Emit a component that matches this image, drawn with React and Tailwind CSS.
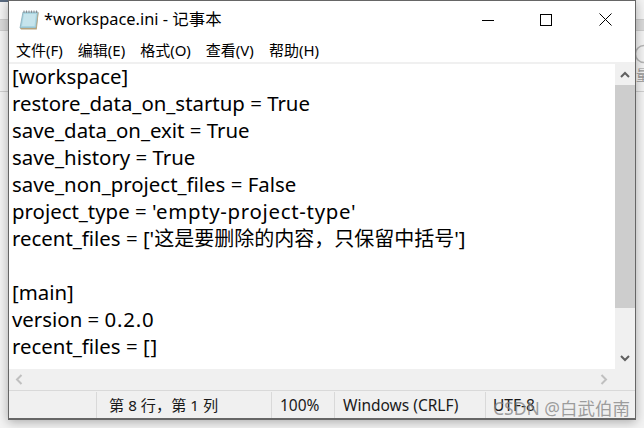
const font = "font-['Noto_Sans','Noto_Sans_CJK_SC',sans-serif]";

function NotepadIcon() {
  return (
    <svg width="20" height="22" viewBox="0 0 20 22">
      <path d="M4 3 L19 3 L17 19 L1 19 Z" fill="#a8d4e0" stroke="#86a9b8" strokeWidth="0.8" />
      <path d="M5 5 L17 5 L15.5 17 L3 17 Z" fill="#c6e4ec" />
      <path d="M1 19 L17 19 L19 3 L19.6 4 L17.8 20.5 L2 20.5 Z" fill="#b5a27c" />
      <path d="M5 1.5 V4 M7.5 1.5 V4 M10 1.5 V4 M12.5 1.5 V4 M15 1.5 V4 M17.5 1.5 V4" stroke="#8a8f94" strokeWidth="1" />
    </svg>
  );
}

export default function App() {
  return (
    <div className={`relative w-[644px] h-[428px] overflow-hidden bg-[#f3f3f3] flex items-start px-2 ${font}`}>
      <div className="absolute left-0 top-0 w-2 h-[2px] bg-[#5a6a80]" />
      <div className="absolute left-0 top-[19px] w-full h-[12px] bg-[#d9d9d9] border-y border-[#cccccc]" />
      <div className="absolute left-0 top-[91px] w-full h-px bg-[#cfcfcf]" />
      <svg width="8" height="20" viewBox="0 0 8 20" className="absolute left-[636px] top-[44px]">
        <path d="M8 1.5A8.5 8.5 0 0 0 8 18.5" fill="none" stroke="#b5b5b5" strokeWidth="1.5" />
      </svg>
      <span className="absolute left-[636px] top-[68px] text-[14px] leading-none text-[#9a9a9a]">量</span>
      <div className="relative w-[628px] h-[420px] bg-white border border-[#666666] border-b-2 flex flex-col shadow-[0_2px_10px_rgba(0,0,0,0.3)]">
        <div className="h-[37px] shrink-0 flex items-center pl-[10px]">
          <NotepadIcon />
          <span className="ml-[5px] text-[16.4px] text-black">*workspace.ini - 记事本</span>
          <div className="ml-auto flex items-center">
            <svg width="14" height="14" viewBox="0 0 14 14" className="mr-[45px]"><path d="M1 7.5H13" stroke="#000" strokeWidth="1" /></svg>
            <svg width="12" height="12" viewBox="0 0 12 12" className="mr-[47px]"><rect x="0.5" y="0.5" width="11" height="11" fill="none" stroke="#000" /></svg>
            <svg width="13" height="13" viewBox="0 0 13 13" className="mr-[23px]"><path d="M0.5 0.5L12.5 12.5M12.5 0.5L0.5 12.5" stroke="#000" strokeWidth="1" /></svg>
          </div>
        </div>
        <div className="h-[24px] shrink-0 flex items-center gap-[15px] pl-[7px] text-[15px] text-black">
          <span>文件(F)</span>
          <span>编辑(E)</span>
          <span>格式(O)</span>
          <span>查看(V)</span>
          <span>帮助(H)</span>
        </div>
        <div className="flex-1 min-h-0 flex border-t-2 border-[#f0f0f0]">
          <div className="flex-1 pl-[3px] text-[20.4px] leading-[27px] text-black whitespace-pre">
            <div className="-mt-px">
              <div>[workspace]</div>
              <div>restore_data_on_startup = True</div>
              <div>save_data_on_exit = True</div>
              <div>save_history = True</div>
              <div>save_non_project_files = False</div>
              <div>project_type = <span className="tracking-[0.7px]">'empty-project-type'</span></div>
              <div>recent_files = ['<span className="text-[20px]">这是要删除的内容，只保留中括号</span>']</div>
              <div>{"\u00a0"}</div>
              <div>[main]</div>
              <div>version = <span className="tracking-[0.8px]">0.2.0</span></div>
              <div>recent_files = <span className="tracking-[1px]">[]</span></div>
            </div>
          </div>
          <div className="w-[20px] bg-[#f0f0f0] flex flex-col items-center">
            <div className="h-[21px] shrink-0 flex items-center justify-center">
              <svg width="10" height="7" viewBox="0 0 10 7"><path d="M1 6L5 2L9 6" fill="none" stroke="#606060" strokeWidth="2" /></svg>
            </div>
            <div className="w-full h-[223px] bg-[#cdcdcd]" />
            <div className="flex-1 flex items-end justify-center pb-[7px]">
              <svg width="10" height="7" viewBox="0 0 10 7"><path d="M1 1L5 5L9 1" fill="none" stroke="#606060" strokeWidth="2" /></svg>
            </div>
          </div>
        </div>
        <div className="h-[21px] shrink-0 bg-[#f0f0f0] flex items-center justify-between px-[6px]">
          <svg width="8" height="11" viewBox="0 0 8 11"><path d="M6.5 1L2 5.5L6.5 10" fill="none" stroke="#c0c0c0" strokeWidth="2" /></svg>
          <svg width="8" height="11" viewBox="0 0 8 11" className="mr-[21px]"><path d="M1.5 1L6 5.5L1.5 10" fill="none" stroke="#c0c0c0" strokeWidth="2" /></svg>
        </div>
        <div className="h-[28px] shrink-0 bg-[#f0f0f0] border-t border-[#d9d9d9] flex text-[15.5px] text-[#1a1a1a] pt-[1px]">
          <div className="w-[87px] shrink-0" />
          <div className="w-[175px] shrink-0 border-l border-[#d9d9d9] pl-[12px] leading-[26px] text-[15.2px]">第 8 行，第 1 列</div>
          <div className="w-[63px] shrink-0 border-l border-[#d9d9d9] pl-[8px] leading-[26px]">100%</div>
          <div className="w-[151px] shrink-0 border-l border-[#d9d9d9] pl-[8px] leading-[26px]">Windows (CRLF)</div>
          <div className="relative flex-1 border-l border-[#d9d9d9] pl-[7px] leading-[26px]">
            UTF-8
            <span className="absolute left-[7px] top-[3px] text-[17.5px] text-[#808080]/75 whitespace-nowrap">CSDN @白武伯南</span>
          </div>
        </div>
      </div>
    </div>
  );
}
